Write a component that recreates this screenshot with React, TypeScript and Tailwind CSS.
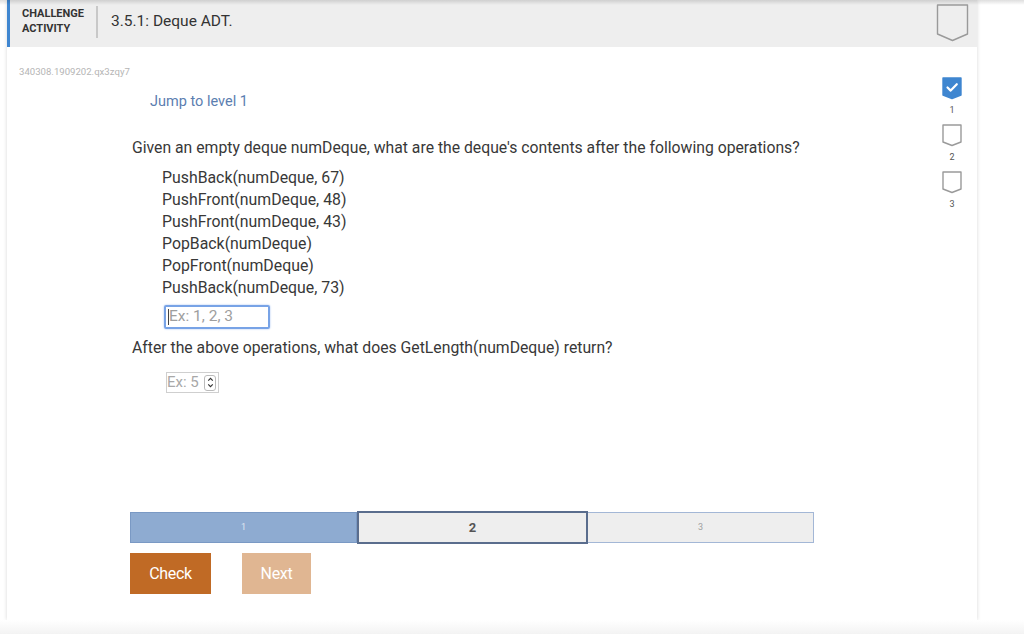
import React from "react";

const font = { fontFamily: "Roboto, 'Liberation Sans', Arial, sans-serif" };

function Shield({ filled, className }: { filled?: boolean; className?: string }) {
  return (
    <svg viewBox="0 0 20 23" className={className}>
      <path
        d="M1 1 H19 V18 L10 21.5 L1 18 Z"
        fill={filled ? "#3f86d0" : "white"}
        stroke={filled ? "#3f86d0" : "#9a9a9a"}
        strokeWidth="1.4"
        strokeLinejoin="round"
      />
      {filled && (
        <polyline
          points="5.5,10.5 8.7,13.6 14.8,7.2"
          fill="none"
          stroke="white"
          strokeWidth="2.2"
          strokeLinecap="round"
          strokeLinejoin="round"
        />
      )}
    </svg>
  );
}

function LevelMarker({ n, done }: { n: number; done?: boolean }) {
  return (
    <div className="flex flex-col items-center">
      <Shield filled={done} className="w-[20px] h-[23px]" />
      <span className="text-[9px] leading-[11px] text-[#555] mt-[5px]">{n}</span>
    </div>
  );
}

const operations = [
  "PushBack(numDeque, 67)",
  "PushFront(numDeque, 48)",
  "PushFront(numDeque, 43)",
  "PopBack(numDeque)",
  "PopFront(numDeque)",
  "PushBack(numDeque, 73)",
];

export default function App() {
  return (
    <div className="relative w-[1024px] h-[634px] bg-white overflow-hidden flex flex-col" style={font}>
      {/* page top shadow */}
      <div className="pointer-events-none absolute inset-x-0 top-0 h-[5px] bg-gradient-to-b from-[rgba(0,0,0,0.13)] to-transparent" />

      <div className="flex flex-1 min-h-0">
        <div className="ml-[7px] w-[970px] flex flex-col shadow-[0_0_4px_rgba(0,0,0,0.16)] bg-white">
          {/* header */}
          <div className="h-[47px] shrink-0 flex items-center bg-[#eeeeee] border-l-[3px] border-[#3f86d0]">
            <div className="pl-[12px] pr-[12px] -mt-[5px] text-[11px] leading-[15px] font-bold text-[#333]">
              <div>CHALLENGE</div>
              <div>ACTIVITY</div>
            </div>
            <div className="w-[2px] h-[32px] bg-[#c8c8c8] -mt-[3px]" />
            <div className="ml-[13px] text-[15.5px] text-[#333] -mt-[4px]">3.5.1: Deque ADT.</div>
            <div className="flex-1" />
            <svg viewBox="0 0 32 38" className="w-[33px] h-[38px] mr-[8px] -mt-[1px]">
              <path d="M1 1 H31 V30 L16 36.5 L1 30 Z" fill="none" stroke="#9a9a9a" strokeWidth="1.4" strokeLinejoin="round" />
            </svg>
          </div>

          {/* body */}
          <div className="flex flex-1">
            <div className="flex-1 flex flex-col">
              <div className="ml-[12px] mt-[19px] text-[9.6px] leading-[12px] text-[#b5b5b5]">340308.1909202.qx3zqy7</div>

              <div className="ml-[125px] flex flex-col">
                <div className="ml-[18px] mt-[14px] text-[14.5px] leading-[20px] text-[#5b7eb0]">Jump to level 1</div>

                <div className="mt-[25px] text-[15.75px] leading-[22px] text-[#383838]">
                  Given an empty deque numDeque, what are the deque's contents after the following operations?
                </div>

                <div className="ml-[30px] mt-[8px] flex flex-col text-[15.85px] leading-[22px] text-[#383838]">
                  {operations.map((op) => (
                    <div key={op}>{op}</div>
                  ))}
                </div>

                <div className="ml-[32px] mt-[6px] w-[106px] h-[24px] rounded-[2px] border-2 border-[#78a3e6] shadow-[0_0_2px_#9bbcf0] flex items-center">
                  <span className="w-[1px] h-[16px] bg-[#444] ml-[2px]" />
                  <input
                    className="w-full bg-transparent outline-none pl-[0px] text-[15.5px] text-[#333] placeholder:text-[#9e9e9e]"
                    placeholder="Ex: 1, 2, 3"
                    style={font}
                  />
                </div>

                <div className="mt-[8px] text-[15.75px] leading-[22px] text-[#383838]">
                  After the above operations, what does GetLength(numDeque) return?
                </div>

                <div className="ml-[34px] mt-[13px] w-[53px] h-[21px] border border-[#cfcfcf] flex items-center">
                  <input
                    className="w-[36px] bg-transparent outline-none pl-[0px] text-[15px] text-[#333] placeholder:text-[#a8a8a8]"
                    placeholder="Ex: 5"
                    style={font}
                  />
                  <div className="ml-[1px] w-[12px] h-[16px] rounded-[3px] border border-[#bbb] flex items-center justify-center">
                    <svg viewBox="0 0 10 14" className="w-[9px] h-[13px]">
                      <polyline points="2.5,5 5,2.5 7.5,5" fill="none" stroke="#333" strokeWidth="1.3" />
                      <polyline points="2.5,9 5,11.5 7.5,9" fill="none" stroke="#333" strokeWidth="1.3" />
                    </svg>
                  </div>
                </div>

                {/* level progress */}
                <div className="-ml-[2px] mt-[119px] w-[684px] h-[31px] flex items-stretch">
                  <div className="w-[227px] bg-[#8eabd1] border border-[#7a99c4] flex items-center justify-center text-[9px] text-[#dfe7f2]">
                    1
                  </div>
                  <div className="w-[231px] -my-[1px] bg-[#eeeeee] border-2 border-[#5a6d8d] flex items-center justify-center text-[13px] font-bold text-[#555]">
                    2
                  </div>
                  <div className="flex-1 bg-[#eeeeee] border border-[#a3b7d6] border-l-0 flex items-center justify-center text-[9px] text-[#a0a0a0]">
                    3
                  </div>
                </div>

                <div className="-ml-[2px] mt-[10px] flex gap-[31px]">
                  <button className="w-[81px] h-[41px] pt-[1px] bg-[#c06a25] text-white text-[16px] tracking-[-0.3px]" style={font}>
                    Check
                  </button>
                  <button className="w-[69px] h-[41px] pt-[1px] bg-[#e0b692] text-white text-[16px] tracking-[-0.3px]" style={font}>
                    Next
                  </button>
                </div>
              </div>
            </div>

            {/* level markers */}
            <div className="w-[44px] mr-[3px] pt-[30px] flex flex-col items-center gap-[8px]">
              <LevelMarker n={1} done />
              <LevelMarker n={2} />
              <LevelMarker n={3} />
            </div>
          </div>
        </div>
      </div>

      {/* page bottom fade */}
      <div className="h-[14px] shrink-0 bg-gradient-to-b from-white to-[#f3f3f3]" />
    </div>
  );
}
